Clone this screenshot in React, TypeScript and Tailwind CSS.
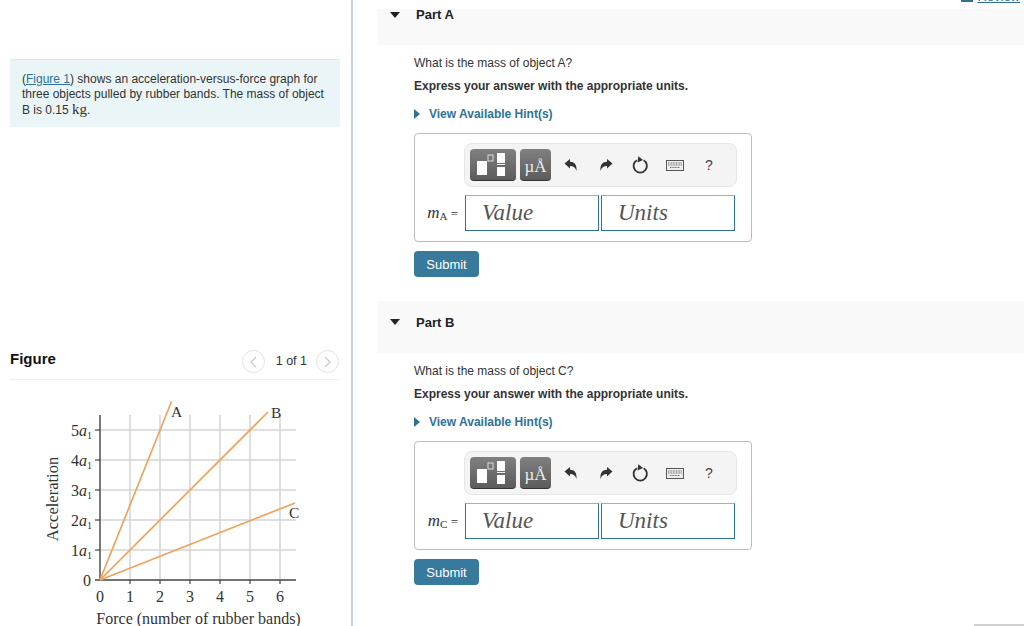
const sans = "font-['Liberation_Sans',Arial,sans-serif]";
const serif = "font-['Liberation_Serif','Times_New_Roman',serif]";

function Graph() {
  const xs = [130, 160, 190, 220, 250, 280];
  const ys = [550, 520, 490, 460, 430];
  const T = { fontFamily: "'Liberation Serif',serif", fill: "#333" } as const;
  return (
    <svg width="340" height="228" viewBox="0 398 340 228" className="block">
      {xs.map((x) => <line key={x} x1={x} x2={x} y1={415} y2={580} stroke="#d4d4d4" strokeWidth="1.5" />)}
      {ys.map((y) => <line key={y} x1={100} x2={296} y1={y} y2={y} stroke="#d4d4d4" strokeWidth="1.5" />)}
      <line x1="100" x2="100" y1="415" y2="580" stroke="#444" strokeWidth="1.4" />
      <line x1="95" x2="296" y1="580" y2="580" stroke="#444" strokeWidth="1.4" />
      {ys.map((y) => <line key={y} x1={95} x2={100} y1={y} y2={y} stroke="#444" strokeWidth="1.2" />)}
      {xs.map((x) => <line key={x} x1={x} x2={x} y1={580} y2={584} stroke="#444" strokeWidth="1.2" />)}
      <line x1="100" x2="171.5" y1="580" y2="401.5" stroke="#eea35c" strokeWidth="1.7" />
      <line x1="100" x2="268" y1="580" y2="412" stroke="#eea35c" strokeWidth="1.7" />
      <line x1="100" x2="295" y1="580" y2="503" stroke="#eea35c" strokeWidth="1.7" />
      <text x="171" y="417" fontSize="15.5" style={T}>A</text>
      <text x="271" y="418" fontSize="15.5" style={T}>B</text>
      <text x="289" y="518" fontSize="15.5" style={T}>C</text>
      {[5, 4, 3, 2, 1].map((n, i) => (
        <text key={n} x="71" y={436 + i * 30} fontSize="16" style={T}>
          {n}<tspan fontStyle="italic">a</tspan><tspan fontSize="10" dy="3">1</tspan>
        </text>
      ))}
      <text x="83" y="586" fontSize="16" style={T}>0</text>
      {[0, 1, 2, 3, 4, 5, 6].map((n) => (
        <text key={n} x={100 + n * 30} y="602" fontSize="16" textAnchor="middle" style={T}>{n}</text>
      ))}
      <text x="198.5" y="624" fontSize="16" textAnchor="middle" style={T}>Force (number of rubber bands)</text>
      <text transform="translate(58 499) rotate(-90)" fontSize="16.5" textAnchor="middle" style={T}>Acceleration</text>
    </svg>
  );
}

function Toolbar() {
  return (
    <div className="ml-[49px] w-[273px] h-[44px] rounded-lg border border-[#e6e6e6] bg-[#f4f4f4] flex items-center pl-[5px]">
      <div className="w-[46px] h-[32px] rounded bg-gradient-to-b from-[#808080] to-[#5c5c5c] border-b border-[#333]">
        <svg width="46" height="32" viewBox="0 0 46 32">
          <rect x="7" y="12" width="10" height="14" fill="#fff" />
          <rect x="18" y="6" width="5" height="6" fill="none" stroke="#ddd" />
          <rect x="27" y="4" width="8" height="10" fill="#fff" />
          <rect x="27" y="15" width="8" height="1" fill="#eee" />
          <rect x="27" y="18" width="8" height="9" fill="#fff" />
        </svg>
      </div>
      <div className={`ml-1 w-[31px] h-[32px] rounded bg-gradient-to-b from-[#808080] to-[#5c5c5c] border-b border-[#333] flex items-end justify-center pb-[5px] text-[17px] leading-none text-[#eee] ${serif}`}>µÅ</div>
      <svg className="ml-[13px]" width="14" height="14" viewBox="0 0 14 14">
        <path d="M0.5 5.5 L6 1 V3.8 C10.5 3.8 13 6.5 12.5 13 C11.5 9.5 9.5 8 6 8 V10.5 Z" fill="#333" />
      </svg>
      <svg className="ml-[21px]" width="14" height="14" viewBox="0 0 14 14">
        <path d="M13.5 5.5 L8 1 V3.8 C3.5 3.8 1 6.5 1.5 13 C2.5 9.5 4.5 8 8 8 V10.5 Z" fill="#333" />
      </svg>
      <svg className="ml-[19px]" width="17" height="18" viewBox="0 0 16 17">
        <path d="M4.5 4 A6.3 6.3 0 1 0 11 4" fill="none" stroke="#333" strokeWidth="1.7" />
        <path d="M5.5 0.5 L10.5 3.5 L5.5 6.5 Z" fill="#333" transform="rotate(8 8 3.5)" />
      </svg>
      <svg className="ml-[17px]" width="18" height="11" viewBox="0 0 18 11">
        <rect x="0.5" y="0.5" width="17" height="10" fill="#eee" stroke="#555" />
        <path d="M2 3 H16 M2 5 H16 M4 7.5 H14" stroke="#666" strokeWidth="1.2" strokeDasharray="1 0.6" />
      </svg>
      <span className={`ml-[21px] text-[14px] text-[#444] ${sans}`}>?</span>
    </div>
  );
}

function Part({ title, letter, q, first }: { title: string; letter: string; q: string; first: boolean }) {
  return (
    <section>
      <div className={`${first ? "h-[36px]" : "h-[52px]"} bg-[#f9f9f9] flex items-start`}>
        <svg className={`ml-[13px] ${first ? "mt-[3px]" : "mt-[18px]"}`} width="10" height="6" viewBox="0 0 10 6"><path d="M0 0 H10 L5 6 Z" fill="#222" /></svg>
        <h2 className={`ml-[16px] text-[13px] font-bold text-[#222] leading-[14px] ${first ? "-mt-[1px]" : "mt-[15px]"}`}>Part {title}</h2>
      </div>
      <div className="pl-[37px]">
        <p className="mt-[11px] text-[12px] leading-[14px] text-[#333]">{q}</p>
        <p className="mt-[9px] text-[12px] leading-[14px] font-bold text-[#333]">Express your answer with the appropriate units.</p>
        <div className="mt-[12px] flex items-center h-[20px] -translate-y-[1px]">
          <svg width="6" height="10" viewBox="0 0 6 10"><path d="M0 0 L6 5 L0 10 Z" fill="#2f7296" /></svg>
          <a className="ml-[9px] text-[12px] font-bold text-[#2f7296]">View Available Hint(s)</a>
        </div>
        <div className="mt-[8px] w-[338px] h-[109px] rounded border border-[#bdbdbd] pt-[9px]">
          <Toolbar />
          <div className="mt-[8px] flex items-center">
            <span className={`w-[50px] pr-[7px] text-right text-[13px] text-[#333] whitespace-nowrap ${serif}`}>
              <i className="text-[17px]">m</i><span className="text-[11px] relative top-[2px]">{letter}</span> =
            </span>
            <div className={`w-[134px] h-[36px] border border-[#2f7296] border-t-[#8fb8cc] pl-[16px] pt-[1px] flex items-center text-[23px] italic text-[#555] ${serif}`}>Value</div>
            <div className={`ml-[2px] w-[134px] h-[36px] border border-[#2f7296] border-t-[#8fb8cc] pl-[16px] pt-[1px] flex items-center text-[23px] italic text-[#555] ${serif}`}>Units</div>
          </div>
        </div>
        <button className="mt-[9px] block w-[65px] h-[26px] pt-[1px] rounded-sm bg-[#387a9b] text-white text-[13px]">Submit</button>
      </div>
    </section>
  );
}

export default function App() {
  return (
    <div className={`w-[1024px] h-[626px] overflow-hidden bg-white flex relative ${sans}`}>
      <aside className="w-[353px] shrink-0 h-full border-r-2 border-[#c5d3e2] pl-[10px]">
        <div className="mt-[59px] w-[330px] h-[68px] bg-[#e9f5f7] border-t border-[#dde9ec] pl-[12px] pr-[8px] pt-[12px] text-[12px] leading-[15px] text-[#333]">
          (<a className="text-[#2f7296] underline">Figure 1</a>) shows an acceleration-versus-force graph for three objects pulled by rubber bands. The mass of object B is 0.15 <span className={`${serif} text-[15px]`}>kg</span>.
        </div>
        <div className="mt-[222px] w-[329px] h-[31px] border-b border-[#f0f0f0] flex items-start">
          <h2 className="text-[15px] font-bold text-[#111] leading-[20px]">Figure</h2>
          <div className="ml-auto flex items-center text-[12.5px] text-[#333] mt-[1px]">
            <span className="w-[23px] h-[23px] rounded-full border border-[#e2e2e2] flex items-center justify-center">
              <svg width="7" height="12" viewBox="0 0 7 12"><path d="M6 1 L1 6 L6 11" fill="none" stroke="#c8c8c8" strokeWidth="1.2" /></svg>
            </span>
            <span className="ml-[11px] mr-[9px]">1 of 1</span>
            <span className="w-[23px] h-[23px] rounded-full border border-[#e2e2e2] flex items-center justify-center">
              <svg width="7" height="12" viewBox="0 0 7 12"><path d="M1 1 L6 6 L1 11" fill="none" stroke="#c8c8c8" strokeWidth="1.2" /></svg>
            </span>
          </div>
        </div>
        <div className="-ml-[10px] mt-[18px]"><Graph /></div>
      </aside>
      <main className="flex-1 pl-[24px] pt-[9px] relative">
        <Part title="A" letter="A" q="What is the mass of object A?" first />
        <div className="h-[24px]" />
        <Part title="B" letter="C" q="What is the mass of object C?" first={false} />
        <div className="absolute right-[4px] -top-[11px] flex items-end gap-1">
          <span className="w-[12px] h-[3px] mb-[2px] bg-[#2f7296]" />
          <a className="text-[13px] leading-[15px] text-[#2f7296] underline">Review</a>
        </div>
        <div className="absolute right-0 bottom-0 w-[50px] h-[2px] bg-[#d0d0d0]" />
      </main>
    </div>
  );
}
